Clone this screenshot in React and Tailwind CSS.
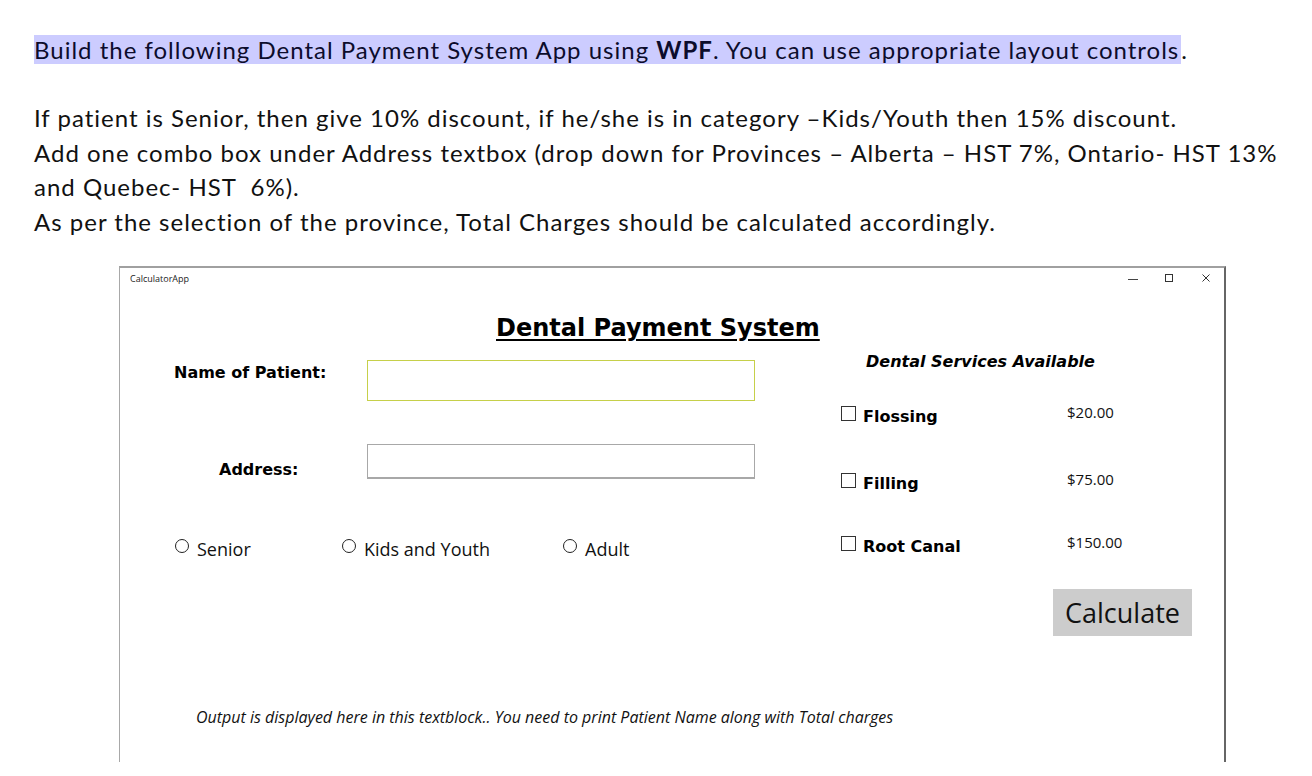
import React from 'react';

const doc = { fontFamily: 'Lato, "Open Sans", sans-serif' };
const ui = { fontFamily: '"Open Sans", "Noto Sans", sans-serif' };
const bold = { fontFamily: '"DejaVu Sans", "Open Sans", sans-serif' };

function Radio({ label, width }) {
    return (
        <div className="flex items-start" style={{ width }}>
            <span className="mt-[2px] block h-[14px] w-[14px] rounded-full border-[1.5px] border-[#222]" />
            <span className="ml-[8px] mt-[2px] whitespace-nowrap text-[18px] leading-[20px] text-[#111]">{label}</span>
        </div>
    );
}

function Service({ label, price, gap }) {
    return (
        <div className="flex items-start" style={{ marginTop: gap }}>
            <span className="block h-[15px] w-[15px] border-[1.5px] border-[#333]" />
            <span className="ml-[7px] mt-[1px] w-[204px] text-[16px] font-bold leading-[20px] text-black" style={bold}>{label}</span>
            <span className="-mt-[3px] text-[15px] leading-[18px] text-[#111]">{price}</span>
        </div>
    );
}

export default function App() {
    return (
        <div className="min-h-[776px] bg-white" style={doc}>
            {/* Assignment text */}
            <div className="pl-[34px] pt-[34px] text-[24px] leading-[34.5px] tracking-[1px] text-[#111]">
                <p className="leading-[32px]">
                    <span className="bg-[#ccccff] pr-[2px] text-[#0c0c2c]">
                        Build the following Dental Payment System App using <b>WPF</b>. You can use appropriate layout controls
                    </span>
                    .
                </p>
                <p className="mt-[35px]">If patient is Senior, then give 10% discount, if he/she is in category –Kids/Youth then 15% discount.</p>
                <p>Add one combo box under Address textbox (drop down for Provinces – Alberta – HST 7%, Ontario- HST 13%</p>
                <p>and Quebec- HST&nbsp; 6%).</p>
                <p>As per the selection of the province, Total Charges should be calculated accordingly.</p>
            </div>

            {/* WPF window screenshot */}
            <div
                className="ml-[119px] mt-[27px] h-[496px] w-[1107px] border-l border-r-2 border-t-2 border-l-[#a8a8a8] border-r-[#666] border-t-[#a0a0a0]"
                style={ui}
            >
                <div className="flex h-[20px] items-center pl-[10px] pr-[14px]">
                    <span className="flex-1 text-[9px] leading-none text-[#222]">CalculatorApp</span>
                    <span className="mt-[2px] block h-px w-[10px] bg-[#444]" />
                    <span className="ml-[27px] block h-[8px] w-[8px] border border-[#333]" />
                    <svg className="ml-[29px]" width="8" height="8" viewBox="0 0 8 8">
                        <path d="M0.5 0.5 L7.5 7.5 M7.5 0.5 L0.5 7.5" stroke="#333" strokeWidth="1" />
                    </svg>
                </div>

                <div className="flex">
                    {/* left form */}
                    <div className="w-[720px]">
                        <div
                            className="ml-[376px] mt-[26px] whitespace-nowrap text-[24px] font-bold leading-[28px] text-black underline decoration-[2px] underline-offset-[3px]"
                            style={bold}
                        >
                            Dental Payment System
                        </div>

                        <div className="mt-[18px] flex items-start">
                            <span className="ml-[54px] mt-[3px] w-[193px] text-[16px] font-bold leading-[20px] text-black" style={bold}>
                                Name of Patient:
                            </span>
                            <div className="h-[41px] w-[388px] border border-[#c6d04a]" />
                        </div>

                        <div className="mt-[43px] flex items-start">
                            <span className="ml-[99px] mt-[16px] w-[148px] text-[16px] font-bold leading-[20px] text-black" style={bold}>
                                Address:
                            </span>
                            <div className="h-[35px] w-[388px] border border-b-2 border-[#a8a8a8]" />
                        </div>

                        <div className="ml-[55px] mt-[57px] flex">
                            <Radio label="Senior" width={167} />
                            <Radio label="Kids and Youth" width={221} />
                            <Radio label="Adult" width={80} />
                        </div>

                        <p className="ml-[76px] mt-[148px] whitespace-nowrap text-[16px] italic leading-[20px] text-[#111]">
                            Output is displayed here in this textblock.. You need to print Patient Name along with Total charges
                        </p>
                    </div>

                    {/* right services */}
                    <div className="pl-[1px]">
                        <div className="ml-[25px] mt-[64px] text-[16px] font-bold italic leading-[20px] text-black" style={bold}>
                            Dental Services Available
                        </div>
                        <Service label="Flossing" price="$20.00" gap={34} />
                        <Service label="Filling" price="$75.00" gap={46} />
                        <Service label="Root Canal" price="$150.00" gap={42} />
                        <div className="ml-[212px] mt-[32px] flex h-[47px] w-[139px] items-center justify-center bg-[#cccccc] text-[27px] leading-none text-[#111]">
                            Calculate
                        </div>
                    </div>
                </div>
            </div>
        </div>
    );
}
